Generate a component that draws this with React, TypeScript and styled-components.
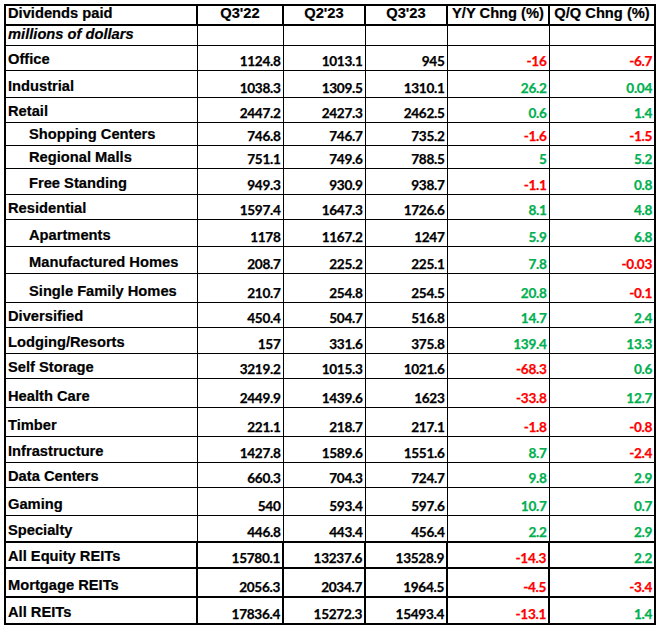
import React from "react";
import styled, { createGlobalStyle, css } from "styled-components";

const GlobalStyle = createGlobalStyle`
  html, body {
    margin: 0;
    padding: 0;
    background: #ffffff;
  }
`;

type Kind = "head" | "note" | "body" | "total";

type Row = {
  label: string;
  values: string[];
  height: number;
  sub?: boolean;
  total?: boolean;
};

const COLUMNS = [192, 86, 82, 82, 102, 106];
const HEADERS = ["Q3'22", "Q2'23", "Q3'23", "Y/Y Chng (%)", "Q/Q Chng (%)"];

const ROWS: Row[] = [
  { label: "Office", values: ["1124.8", "1013.1", "945", "-16", "-6.7"], height: 25 },
  { label: "Industrial", values: ["1038.3", "1309.5", "1310.1", "26.2", "0.04"], height: 27 },
  { label: "Retail", values: ["2447.2", "2427.3", "2462.5", "0.6", "1.4"], height: 25 },
  { label: "Shopping Centers", values: ["746.8", "746.7", "735.2", "-1.6", "-1.5"], height: 23, sub: true },
  { label: "Regional Malls", values: ["751.1", "749.6", "788.5", "5", "5.2"], height: 23, sub: true },
  { label: "Free Standing", values: ["949.3", "930.9", "938.7", "-1.1", "0.8"], height: 26, sub: true },
  { label: "Residential", values: ["1597.4", "1647.3", "1726.6", "8.1", "4.8"], height: 25 },
  { label: "Apartments", values: ["1178", "1167.2", "1247", "5.9", "6.8"], height: 27, sub: true },
  { label: "Manufactured Homes", values: ["208.7", "225.2", "225.1", "7.8", "-0.03"], height: 27, sub: true },
  { label: "Single Family Homes", values: ["210.7", "254.8", "254.5", "20.8", "-0.1"], height: 29, sub: true },
  { label: "Diversified", values: ["450.4", "504.7", "516.8", "14.7", "2.4"], height: 25 },
  { label: "Lodging/Resorts", values: ["157", "331.6", "375.8", "139.4", "13.3"], height: 26 },
  { label: "Self Storage", values: ["3219.2", "1015.3", "1021.6", "-68.3", "0.6"], height: 25 },
  { label: "Health Care", values: ["2449.9", "1439.6", "1623", "-33.8", "12.7"], height: 29 },
  { label: "Timber", values: ["221.1", "218.7", "217.1", "-1.8", "-0.8"], height: 29 },
  { label: "Infrastructure", values: ["1427.8", "1589.6", "1551.6", "8.7", "-2.4"], height: 26 },
  { label: "Data Centers", values: ["660.3", "704.3", "724.7", "9.8", "2.9"], height: 25 },
  { label: "Gaming", values: ["540", "593.4", "597.6", "10.7", "0.7"], height: 28 },
  { label: "Specialty", values: ["446.8", "443.4", "456.4", "2.2", "2.9"], height: 27 },
  { label: "All Equity REITs", values: ["15780.1", "13237.6", "13528.9", "-14.3", "2.2"], height: 26, total: true },
  { label: "Mortgage REITs", values: ["2056.3", "2034.7", "1964.5", "-4.5", "-3.4"], height: 29, total: true },
  { label: "All REITs", values: ["17836.4", "15272.3", "15493.4", "-13.1", "1.4"], height: 27, total: true },
];

const Sheet = styled.div`
  padding: 4px 0 0 4px;
`;

const Grid = styled.table`
  border-collapse: collapse;
  table-layout: fixed;
  width: 652px;
`;

const SheetRow = styled.tr<{ $height: number }>`
  height: ${(p) => p.$height}px;
`;

const cellBorders = css<{ $kind: Kind }>`
  border: ${(p) => (p.$kind === "head" || p.$kind === "total" ? 2 : 1)}px solid #000000;
  &:first-child {
    border-left-width: 2px;
  }
  &:last-child {
    border-right-width: 2px;
  }
`;

const textFace = css`
  font-family: "Liberation Sans", Arial, sans-serif;
  font-weight: 700;
  font-size: 14.7px;
  line-height: 14px;
  color: #000000;
  -webkit-text-stroke: 0.2px currentColor;
`;

const LabelCell = styled.td<{ $kind: Kind; $sub?: boolean }>`
  ${cellBorders}
  ${textFace}
  padding: 0 2px 4px ${(p) => (p.$sub ? 23 : 2)}px;
  vertical-align: bottom;
  text-align: left;
  white-space: nowrap;
  overflow: hidden;
  font-style: ${(p) => (p.$kind === "note" ? "italic" : "normal")};
`;

const HeadCell = styled.th<{ $kind: Kind }>`
  ${cellBorders}
  ${textFace}
  padding: 0 2px 4px;
  vertical-align: bottom;
  text-align: center;
  white-space: nowrap;
`;

const ValueCell = styled.td<{ $kind: Kind; $tone?: "up" | "down" }>`
  ${cellBorders}
  padding: 0 2px 2px;
  vertical-align: bottom;
  text-align: right;
  white-space: nowrap;
  font-family: Lato, "Liberation Sans", sans-serif;
  font-weight: 700;
  font-size: 13.6px;
  line-height: 13px;
  letter-spacing: -0.3px;
  -webkit-text-stroke: 0.25px currentColor;
  color: ${(p) => (p.$tone === "down" ? "#ff0000" : p.$tone === "up" ? "#00b050" : "#000000")};
`;

export default function App() {
  return (
    <>
      <GlobalStyle />
      <Sheet>
        <Grid>
          <colgroup>
            {COLUMNS.map((w, i) => (
              <col key={i} style={{ width: w }} />
            ))}
          </colgroup>
          <thead>
            <SheetRow $height={20}>
              <LabelCell as="th" $kind="head">
                Dividends paid
              </LabelCell>
              {HEADERS.map((h) => (
                <HeadCell key={h} $kind="head">
                  {h}
                </HeadCell>
              ))}
            </SheetRow>
          </thead>
          <tbody>
            <SheetRow $height={20}>
              <LabelCell $kind="note">millions of dollars</LabelCell>
              {HEADERS.map((h) => (
                <ValueCell key={h} $kind="note" />
              ))}
            </SheetRow>
            {ROWS.map((row) => {
              const kind: Kind = row.total ? "total" : "body";
              return (
                <SheetRow key={row.label} $height={row.height}>
                  <LabelCell $kind={kind} $sub={row.sub}>
                    {row.label}
                  </LabelCell>
                  {row.values.map((v, i) => (
                    <ValueCell
                      key={i}
                      $kind={kind}
                      $tone={i < 3 ? undefined : v.startsWith("-") ? "down" : "up"}
                    >
                      {v}
                    </ValueCell>
                  ))}
                </SheetRow>
              );
            })}
          </tbody>
        </Grid>
      </Sheet>
    </>
  );
}
